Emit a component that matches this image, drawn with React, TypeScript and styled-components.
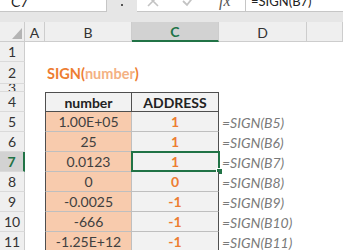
import React from 'react'
import styled, { createGlobalStyle } from 'styled-components'

const GlobalStyle = createGlobalStyle`
    html, body {
        margin: 0;
        padding: 0;
        background: #e6e6e6;
        overflow: hidden;
        font-family: Lato, "Liberation Sans", sans-serif;
    }
`

const colors = {
    green: '#217346',
    orange: '#ed7d31',
    lightOrange: '#f4b183',
    fill: '#f8cbad',
    headerBg: '#efefef',
    headerLine: '#cdcdcd',
    activeHeader: '#d2d2d2',
    tableDark: '#4f4f4f',
    tableLight: '#bfbfbf',
}

const Page = styled.div`
    width: 343px;
    height: 250px;
    overflow: hidden;
    display: flex;
    flex-direction: column;
`

const FormulaBar = styled.div`
    display: flex;
    height: 21px;
    margin-top: -9px;
    flex-shrink: 0;
`

const NameBox = styled.div`
    width: 107px;
    background: #fff;
    border-right: 1px solid #c6c6c6;
    border-bottom: 1px solid #c6c6c6;
    box-sizing: border-box;
    display: flex;
    align-items: center;
    padding-left: 11px;
    font-size: 14px;
    color: #222;
`

const Grip = styled.div`
    width: 30px;
    display: flex;
    align-items: flex-end;
    justify-content: center;
    padding-bottom: 6px;
    box-sizing: border-box;
    span {
        width: 2px;
        height: 2px;
        background: #555;
    }
`

const Tools = styled.div`
    width: 108px;
    background: #fff;
    display: flex;
    align-items: center;
    box-sizing: border-box;
    border-bottom: 1px solid #c6c6c6;
    svg {
        flex-shrink: 0;
    }
`

const Fx = styled.span`
    font-family: "Liberation Serif", serif;
    font-style: italic;
    font-size: 16px;
    color: #555;
    margin-left: 24px;
`

const FormulaInput = styled.div`
    flex: 1;
    background: #fff;
    border-left: 1px solid #c6c6c6;
    border-bottom: 1px solid #c6c6c6;
    box-sizing: border-box;
    display: flex;
    align-items: center;
    padding-left: 5px;
    font-size: 13px;
    color: #222;
`

const Gap = styled.div`
    height: 10px;
    flex-shrink: 0;
`

const Sheet = styled.div`
    display: grid;
    grid-template-columns: 25px 20px 87px 87px 88px 1fr;
    grid-template-rows: 20px 20px 22px 8px repeat(8, 20px);
    background: #fff;
    font-size: 14px;
`

const Corner = styled.div`
    background: ${colors.headerBg};
    border-bottom: 1px solid ${colors.headerLine};
    border-right: 1px solid ${colors.headerLine};
    box-sizing: border-box;
    position: relative;
    &::after {
        content: '';
        position: absolute;
        right: 2px;
        bottom: 2px;
        border-style: solid;
        border-width: 0 0 11px 10px;
        border-color: transparent transparent #b4b4b4 transparent;
    }
`

const ColHeader = styled.div<{ $active?: boolean }>`
    background: ${(p) => (p.$active ? colors.activeHeader : colors.headerBg)};
    color: ${(p) => (p.$active ? colors.green : '#333')};
    font-weight: ${(p) => (p.$active ? 700 : 400)};
    border-right: 1px solid ${colors.headerLine};
    border-bottom: ${(p) =>
        p.$active ? `2px solid ${colors.green}` : `1px solid ${colors.headerLine}`};
    box-sizing: border-box;
    display: flex;
    align-items: center;
    justify-content: center;
    padding-top: 1px;
`

const RowHeader = styled.div<{ $active?: boolean; $short?: boolean }>`
    background: ${(p) => (p.$active ? colors.activeHeader : colors.headerBg)};
    color: ${(p) => (p.$active ? colors.green : '#333')};
    font-weight: ${(p) => (p.$active ? 700 : 400)};
    border-right: ${(p) =>
        p.$active ? `2px solid ${colors.green}` : `1px solid ${colors.headerLine}`};
    border-bottom: 1px solid #dadada;
    box-sizing: border-box;
    display: flex;
    align-items: ${(p) => (p.$short ? 'flex-start' : 'center')};
    justify-content: center;
    overflow: hidden;
    line-height: ${(p) => (p.$short ? '7px' : 1)};
`

const Blank = styled.div``

const Title = styled.div`
    grid-column: 3 / span 2;
    display: flex;
    align-items: center;
    padding-left: 2px;
    font-size: 14.5px;
    font-weight: 700;
    color: ${colors.orange};
    span {
        color: ${colors.lightOrange};
    }
`

const TableCell = styled.div<{ $first?: boolean; $head?: boolean; $last?: boolean }>`
    box-sizing: border-box;
    display: flex;
    align-items: center;
    justify-content: center;
    border-left: ${(p) => (p.$first ? `1px solid ${colors.tableDark}` : 'none')};
    border-right: 1px solid
        ${(p) => (p.$first && !p.$head ? colors.tableLight : colors.tableDark)};
    border-top: ${(p) => (p.$head ? `1px solid ${colors.tableDark}` : 'none')};
    border-bottom: 1px solid
        ${(p) => (p.$head || p.$last ? colors.tableDark : colors.tableLight)};
`

const HeadCell = styled(TableCell)`
    background: #f2f2f2;
    font-weight: 700;
    color: #222;
`

const NumberCell = styled(TableCell)`
    background: ${colors.fill};
    color: #404040;
`

const ResultCell = styled(TableCell)<{ $selected?: boolean }>`
    background: #f2f2f2;
    color: ${colors.orange};
    font-weight: 700;
    position: relative;
    ${(p) =>
        p.$selected &&
        `
        &::before {
            content: '';
            position: absolute;
            left: -1px;
            top: -1px;
            right: -2px;
            bottom: -1px;
            border: 2px solid ${colors.green};
        }
        &::after {
            content: '';
            position: absolute;
            right: -5px;
            bottom: -4px;
            width: 5px;
            height: 5px;
            background: ${colors.green};
            border: 1px solid #fff;
        }
    `}
`

const FormulaCell = styled.div`
    grid-column: 5 / span 2;
    display: flex;
    align-items: center;
    padding-left: 3px;
    font-style: italic;
    color: #7a7a7a;
    white-space: nowrap;
`

const rows = [
    { n: 5, value: '1.00E+05', result: '1' },
    { n: 6, value: '25', result: '1' },
    { n: 7, value: '0.0123', result: '1' },
    { n: 8, value: '0', result: '0' },
    { n: 9, value: '-0.0025', result: '-1' },
    { n: 10, value: '-666', result: '-1' },
    { n: 11, value: '-1.25E+12', result: '-1' },
]

const columns = ['A', 'B', 'C', 'D', '']

const App: React.FC = () => {
    return (
        <Page>
            <GlobalStyle />
            <FormulaBar>
                <NameBox>C7</NameBox>
                <Grip>
                    <span />
                </Grip>
                <Tools>
                    <svg width="12" height="12" viewBox="0 0 12 12" style={{ marginLeft: 10 }}>
                        <path d="M1 1 L11 11 M11 1 L1 11" stroke="#c3c3c3" strokeWidth="1.6" />
                    </svg>
                    <svg width="13" height="12" viewBox="0 0 13 12" style={{ marginLeft: 23 }}>
                        <path d="M1 6 L5 10 L12 1" stroke="#c3c3c3" strokeWidth="1.8" fill="none" />
                    </svg>
                    <Fx>fx</Fx>
                </Tools>
                <FormulaInput>=SIGN(B7)</FormulaInput>
            </FormulaBar>
            <Gap />
            <Sheet>
                <Corner />
                {columns.map((c) => (
                    <ColHeader key={c || 'E'} $active={c === 'C'}>
                        {c}
                    </ColHeader>
                ))}

                <RowHeader>1</RowHeader>
                <Blank />
                <Blank />
                <Blank />
                <Blank />
                <Blank />

                <RowHeader>2</RowHeader>
                <Blank />
                <Title>
                    SIGN(<span>number</span>)
                </Title>
                <Blank />
                <Blank />

                <RowHeader $short>3</RowHeader>
                <Blank />
                <Blank />
                <Blank />
                <Blank />
                <Blank />

                <RowHeader>4</RowHeader>
                <Blank />
                <HeadCell $first $head>
                    number
                </HeadCell>
                <HeadCell $head>ADDRESS</HeadCell>
                <Blank />
                <Blank />

                {rows.map((r, i) => (
                    <React.Fragment key={r.n}>
                        <RowHeader $active={r.n === 7}>{r.n}</RowHeader>
                        <Blank />
                        <NumberCell $first $last={i === rows.length - 1}>
                            {r.value}
                        </NumberCell>
                        <ResultCell $last={i === rows.length - 1} $selected={r.n === 7}>
                            {r.result}
                        </ResultCell>
                        <FormulaCell>=SIGN(B{r.n})</FormulaCell>
                    </React.Fragment>
                ))}
            </Sheet>
        </Page>
    )
}

export default App
